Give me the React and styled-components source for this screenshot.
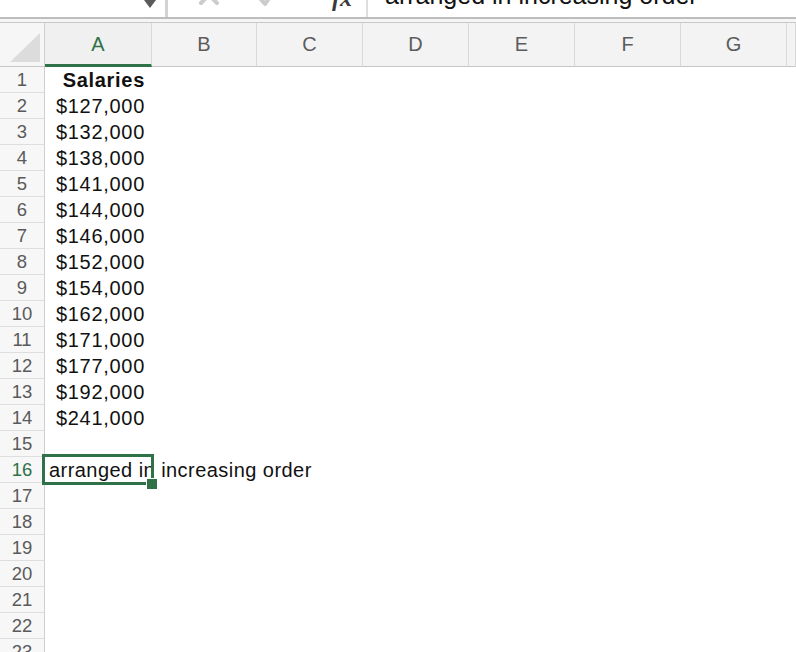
import React from "react";
import styled, { createGlobalStyle } from "styled-components";

const GlobalStyle = createGlobalStyle`
  html, body {
    margin: 0;
    padding: 0;
    background: #ffffff;
    overflow: hidden;
  }
  body {
    font-family: "Liberation Sans", Arial, Helvetica, sans-serif;
  }
`;

const GREEN = "#2f7248";

const Page = styled.div`
  width: 796px;
  height: 652px;
  overflow: hidden;
  background: #ffffff;
  display: flex;
  flex-direction: column;
`;

const FormulaBar = styled.div`
  height: 17px;
  flex: none;
  display: flex;
  align-items: flex-start;
  overflow: hidden;
  border-bottom: 2px solid #bdbdbd;
  background: #ffffff;
`;

const NameBox = styled.div`
  width: 168px;
  height: 100%;
  flex: none;
  display: flex;
  justify-content: flex-end;
  border-right: 3px solid #d3d3d3;
  box-sizing: border-box;
`;

const DropArrow = styled.div`
  width: 0;
  height: 0;
  margin-right: 9px;
  border-left: 6px solid transparent;
  border-right: 6px solid transparent;
  border-top: 8px solid #5a5a5a;
`;

const Tool = styled.svg`
  flex: none;
  margin-top: -16px;
  margin-left: ${({ $left }) => $left}px;
`;

const Fx = styled.span`
  flex: none;
  margin-left: ${({ $left }) => $left}px;
  margin-top: -14px;
  font-family: "Liberation Serif", "Times New Roman", serif;
  font-style: italic;
  font-weight: bold;
  font-size: 24px;
  line-height: 24px;
  color: #3a3a3a;
`;

const Divider = styled.div`
  flex: none;
  width: 2px;
  height: 100%;
  margin-left: 14px;
  background: #dedede;
`;

const FormulaText = styled.span`
  flex: none;
  margin-left: 17px;
  margin-top: -17px;
  font-size: 25px;
  line-height: 25px;
  color: #111111;
  white-space: nowrap;
`;

const Strip = styled.div`
  height: 3px;
  flex: none;
  background: #f5f5f5;
  border-bottom: 1px solid #c9c9c9;
`;

const HeaderRow = styled.div`
  height: 44px;
  flex: none;
  display: flex;
  background: #f3f3f3;
`;

const Corner = styled.div`
  width: 45px;
  flex: none;
  box-sizing: border-box;
  border-right: 1px solid #cfcfcf;
  border-bottom: 1px solid #c6c6c6;
  background: #f6f6f6;
  display: flex;
  align-items: flex-end;
  justify-content: flex-end;
  padding: 0 4px 4px 0;
`;

const ColHead = styled.div`
  width: ${({ $w }) => $w}px;
  flex: ${({ $w }) => ($w ? "none" : "1")};
  box-sizing: border-box;
  display: flex;
  align-items: center;
  justify-content: center;
  border-right: 1px solid #d9d9d9;
  border-bottom: ${({ $active }) =>
    $active ? `3px solid ${GREEN}` : "1px solid #c6c6c6"};
  padding-top: ${({ $active }) => ($active ? "2px" : "0")};
  background: ${({ $active }) => ($active ? "#f0f0f0" : "#f3f3f3")};
  color: ${({ $active }) => ($active ? GREEN : "#5c5c5c")};
  font-size: 20px;
`;

const Body = styled.div`
  flex: 1;
  display: flex;
  flex-direction: column;
`;

const Row = styled.div`
  height: 26px;
  flex: none;
  display: flex;
`;

const RowNum = styled.div`
  width: 45px;
  flex: none;
  box-sizing: border-box;
  border-right: 1px solid #cfcfcf;
  border-bottom: 1px solid #dedede;
  background: #f7f7f7;
  display: flex;
  align-items: center;
  justify-content: center;
  font-size: 18.5px;
  color: ${({ $active }) => ($active ? GREEN : "#5a5a5a")};
`;

const Cell = styled.div`
  position: relative;
  width: ${({ $w }) => $w}px;
  flex: none;
  box-sizing: border-box;
  display: flex;
  align-items: center;
  justify-content: ${({ $align }) =>
    $align === "right" ? "flex-end" : "flex-start"};
  padding: 0 7px 0 4px;
  font-size: 20px;
  letter-spacing: 0.7px;
  font-weight: ${({ $bold }) => ($bold ? "bold" : "normal")};
  color: #111111;
  white-space: nowrap;
  overflow: visible;
  z-index: ${({ $selected }) => ($selected ? 2 : 1)};
`;

const OverflowText = styled.span`
  letter-spacing: 0.45px;
`;

const Selection = styled.div`
  position: absolute;
  top: -3px;
  left: -3px;
  right: -2px;
  bottom: -2px;
  border: 3px solid ${GREEN};
  pointer-events: none;
`;

const FillHandle = styled.div`
  position: absolute;
  right: -6px;
  bottom: -7px;
  width: 10px;
  height: 10px;
  background: ${GREEN};
  box-shadow: 0 0 0 1px #ffffff;
`;

const columns = [
  { name: "A", w: 107 },
  { name: "B", w: 105 },
  { name: "C", w: 106 },
  { name: "D", w: 106 },
  { name: "E", w: 106 },
  { name: "F", w: 106 },
  { name: "G", w: 106 },
  { name: "", w: 0 },
];

const salaries = [
  "$127,000",
  "$132,000",
  "$138,000",
  "$141,000",
  "$144,000",
  "$146,000",
  "$152,000",
  "$154,000",
  "$162,000",
  "$171,000",
  "$177,000",
  "$192,000",
  "$241,000",
];

function cellFor(row) {
  if (row === 1) return { text: "Salaries", align: "right", bold: true };
  if (row >= 2 && row <= 14) return { text: salaries[row - 2], align: "right" };
  if (row === 16)
    return { text: "arranged in increasing order", align: "left", selected: true };
  return { text: "" };
}

export default function App() {
  const rows = Array.from({ length: 23 }, (_, i) => i + 1);

  return (
    <>
      <GlobalStyle />
      <Page>
        <FormulaBar>
          <NameBox>
            <DropArrow />
          </NameBox>
          <Tool $left={30} width="22" height="22" viewBox="0 0 22 22">
            <path
              d="M3 3 L19 19 M19 3 L3 19"
              stroke="#cccccc"
              strokeWidth="4"
              strokeLinecap="round"
              fill="none"
            />
          </Tool>
          <Tool $left={36} width="22" height="22" viewBox="0 0 22 22">
            <path
              d="M2 12 L9 20 L21 3"
              stroke="#cccccc"
              strokeWidth="4"
              strokeLinecap="round"
              strokeLinejoin="round"
              fill="none"
            />
          </Tool>
          <Fx $left={54}>fx</Fx>
          <Divider />
          <FormulaText>arranged in increasing order</FormulaText>
        </FormulaBar>
        <Strip />
        <HeaderRow>
          <Corner>
            <svg width="30" height="29" viewBox="0 0 30 29">
              <polygon points="30,0 30,29 0,29" fill="#dcdcdc" />
            </svg>
          </Corner>
          {columns.map((c, i) => (
            <ColHead key={i} $w={c.w} $active={c.name === "A"}>
              {c.name}
            </ColHead>
          ))}
        </HeaderRow>
        <Body>
          {rows.map((r) => {
            const cell = cellFor(r);
            return (
              <Row key={r}>
                <RowNum $active={r === 16}>{r}</RowNum>
                <Cell
                  $w={107}
                  $align={cell.align}
                  $bold={cell.bold}
                  $selected={cell.selected}
                >
                  {cell.selected ? (
                    <>
                      <OverflowText>{cell.text}</OverflowText>
                      <Selection>
                        <FillHandle />
                      </Selection>
                    </>
                  ) : (
                    cell.text
                  )}
                </Cell>
              </Row>
            );
          })}
        </Body>
      </Page>
    </>
  );
}
